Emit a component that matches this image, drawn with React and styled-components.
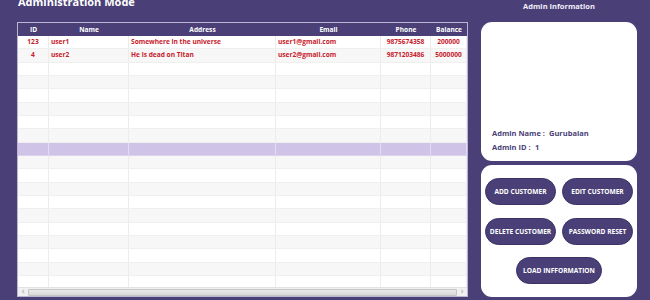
import React from "react";
import styled, { createGlobalStyle } from "styled-components";

const PURPLE = "#4a3f76";

const Global = createGlobalStyle`
  html, body { margin: 0; padding: 0; background: ${PURPLE}; }
  body { font-family: "Open Sans", "Liberation Sans", sans-serif; overflow: hidden; }
  * { box-sizing: border-box; }
`;

const Page = styled.div`
  display: flex;
  gap: 13px;
  width: 650px;
  height: 300px;
  padding: 0 13px 3px 17px;
  overflow: hidden;
`;

const LeftCol = styled.div`
  width: 451px;
  display: flex;
  flex-direction: column;
`;

const Title = styled.h1`
  margin: -6px 0 0 1px;
  height: 28px;
  font-size: 11px;
  line-height: 16px;
  font-weight: 700;
  color: #fff;
`;

const Grid = styled.div`
  flex: 1;
  border: 1px solid #bdb6d2;
  background: #fff;
  display: flex;
  flex-direction: column;
  overflow: hidden;
`;

const cols = "31px 80px 147px 105px 50px 36px";

const HeadRow = styled.div`
  display: grid;
  grid-template-columns: ${cols};
  height: 13px;
  background: ${PURPLE};
`;

const HeadCell = styled.div`
  color: #fff;
  font-size: 6.6px;
  font-weight: 700;
  line-height: 13px;
  text-align: center;
  white-space: nowrap;
`;

const Body = styled.div`
  flex: 1;
  overflow: hidden;
`;

const Row = styled.div`
  display: grid;
  grid-template-columns: ${cols};
  height: 13.33px;
  background: ${(p) => (p.$selected ? "#cfc4e7" : p.$alt ? "#f7f7f7" : "#ffffff")};
  border-bottom: 1px solid ${(p) => (p.$selected ? "#dcd3ee" : "#efefef")};
`;

const Cell = styled.div`
  border-right: 1px solid ${(p) => (p.$selected ? "#e3dcf2" : "#ececec")};
  color: #c8202b;
  font-size: 6.6px;
  font-weight: 700;
  line-height: 12.33px;
  padding: 0 2px;
  text-align: ${(p) => (p.$center ? "center" : "left")};
  white-space: nowrap;
  overflow: hidden;
`;

const Scrollbar = styled.div`
  height: 9px;
  display: flex;
  align-items: center;
  background: #f0f0f0;
  border-top: 1px solid #e2e2e2;
  padding: 0 2px;
  gap: 2px;
`;

const Arrow = styled.span`
  width: 6px;
  font-size: 8px;
  line-height: 8px;
  color: #9a9a9a;
  text-align: center;
  font-family: "DejaVu Sans", sans-serif;
`;

const Thumb = styled.div`
  flex: 1;
  height: 7px;
  background: linear-gradient(#eaeaea, #d8d8d8);
  border: 1px solid #c4c4c4;
  border-radius: 1px;
`;

const RightCol = styled.div`
  width: 156px;
  display: flex;
  flex-direction: column;
`;

const SideTitle = styled.div`
  height: 22px;
  color: #f1effa;
  font-size: 7.5px;
  font-weight: 700;
  text-align: center;
  line-height: 12px;
`;

const InfoCard = styled.div`
  height: 139px;
  background: #fff;
  border-radius: 11px;
  display: flex;
  flex-direction: column;
  justify-content: flex-end;
  padding: 0 0 8px 11px;
  gap: 3px;
`;

const InfoLine = styled.div`
  display: flex;
  color: ${PURPLE};
  font-size: 7.5px;
  font-weight: 700;
  line-height: 11px;
`;

const Label = styled.span`
  width: ${(p) => p.$w}px;
`;

const ActionCard = styled.div`
  margin-top: 4px;
  flex: 1;
  background: #fff;
  border-radius: 11px;
  padding: 13px 4px 0 4px;
  display: grid;
  grid-template-columns: 71px 71px;
  column-gap: 6px;
  row-gap: 13px;
  align-content: start;
`;

const Pill = styled.button`
  height: 27px;
  border: 1px solid #3b3163;
  border-radius: 14px;
  background: ${PURPLE};
  color: #fff;
  font-family: "Open Sans", "Liberation Sans", sans-serif;
  font-size: 6.6px;
  font-weight: 700;
  padding: 0;
  white-space: nowrap;
  grid-column: ${(p) => (p.$wide ? "1 / span 2" : "auto")};
  width: ${(p) => (p.$wide ? "86px" : "71px")};
  justify-self: center;
  margin-top: ${(p) => (p.$wide ? "-1px" : "0")};
`;

const data = [
  ["123", "user1", "Somewhere in the universe", "user1@gmail.com", "9875674358", "200000"],
  ["4", "user2", "He is dead on Titan", "user2@gmail.com", "9871203486", "5000000"],
];

const headers = ["ID", "Name", "Address", "Email", "Phone", "Balance"];
const centered = [true, false, false, false, true, true];

export default function App() {
  const rows = [];
  for (let i = 0; i < 20; i++) rows.push(data[i] || ["", "", "", "", "", ""]);
  return (
    <>
      <Global />
      <Page>
        <LeftCol>
          <Title>Administration Mode</Title>
          <Grid>
            <HeadRow>
              {headers.map((h) => (
                <HeadCell key={h}>{h}</HeadCell>
              ))}
            </HeadRow>
            <Body>
              {rows.map((r, i) => (
                <Row key={i} $alt={i % 2 === 1} $selected={i === 8}>
                  {r.map((c, j) => (
                    <Cell key={j} $center={centered[j]} $selected={i === 8}>
                      {c}
                    </Cell>
                  ))}
                </Row>
              ))}
            </Body>
            <Scrollbar>
              <Arrow>‹</Arrow>
              <Thumb />
              <Arrow>›</Arrow>
            </Scrollbar>
          </Grid>
        </LeftCol>
        <RightCol>
          <SideTitle>Admin Information</SideTitle>
          <InfoCard>
            <InfoLine>
              <Label $w={57}>Admin Name :</Label>
              <span>Gurubalan</span>
            </InfoLine>
            <InfoLine>
              <Label $w={43}>Admin ID :</Label>
              <span>1</span>
            </InfoLine>
          </InfoCard>
          <ActionCard>
            <Pill>ADD CUSTOMER</Pill>
            <Pill>EDIT CUSTOMER</Pill>
            <Pill>DELETE CUSTOMER</Pill>
            <Pill>PASSWORD RESET</Pill>
            <Pill $wide>LOAD INFFORMATION</Pill>
          </ActionCard>
        </RightCol>
      </Page>
    </>
  );
}
